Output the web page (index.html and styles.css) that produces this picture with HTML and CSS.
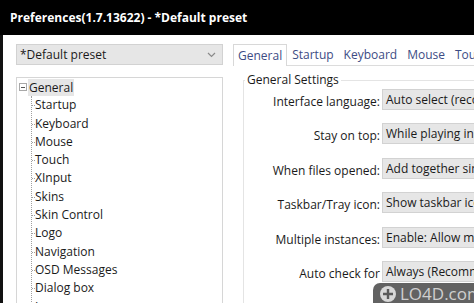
FILE: index.html
```html
<!DOCTYPE html>
<html lang="en">
<head>
  <meta charset="UTF-8">
  <title>Preferences</title>
  <link rel="stylesheet" href="styles.css">
</head>
<body>
  <div class="titlebar">Preferences(1.7.13622) - *Default preset</div>

  <div class="window">
    <!-- left: preset + tree -->
    <div class="sidebar">
      <div class="preset">
        <span>*Default preset</span>
        <svg class="chevron" width="9" height="6" viewBox="0 0 9 6"><path d="M1 1l3.5 3.5L8 1" fill="none" stroke="#8a8a8a" stroke-width="1.2"/></svg>
      </div>

      <div class="tree">
        <div class="root">
          <span class="toggle"></span>
          <span class="root-label">General</span>
        </div>
        <ul class="children">
          <li>Startup</li>
          <li>Keyboard</li>
          <li>Mouse</li>
          <li>Touch</li>
          <li>XInput</li>
          <li>Skins</li>
          <li>Skin Control</li>
          <li>Logo</li>
          <li>Navigation</li>
          <li>OSD Messages</li>
          <li>Dialog box</li>
          <li>Language</li>
        </ul>
      </div>
    </div>

    <!-- right: tabs + settings -->
    <div class="main">
      <div class="tabs">
        <span class="tab active">General</span>
        <span class="tab">Startup</span>
        <span class="tab">Keyboard</span>
        <span class="tab">Mouse</span>
        <span class="tab">Touch</span>
      </div>

      <div class="panel">
        <fieldset class="group">
          <legend>General Settings</legend>
          <div class="form">
            <label>Interface language:</label>
            <div class="select">Auto select (recommended)</div>

            <label>Stay on top:</label>
            <div class="select">While playing in fullscreen</div>

            <label>When files opened:</label>
            <div class="select">Add together similar files</div>

            <label>Taskbar/Tray icon:</label>
            <div class="select">Show taskbar icon</div>

            <label>Multiple instances:</label>
            <div class="select">Enable: Allow multiple</div>

            <label>Auto check for</label>
            <div class="select">Always (Recommended)</div>
          </div>
        </fieldset>
      </div>
    </div>
  </div>

  <!-- watermark -->
  <div class="watermark">
    <svg width="20" height="18" viewBox="0 0 20 18">
      <circle cx="10" cy="9" r="8" fill="#d8d8d8"/>
      <path d="M5 9h10M10 4v10" stroke="#5a5a5a" stroke-width="2.4"/>
    </svg>
    <span>LO4D.com</span>
  </div>
</body>
</html>
```

FILE: styles.css
```css
body {
  margin: 0;
  width: 474px;
  height: 303px;
  overflow: hidden;
  background: #fff;
  font-family: "Open Sans", "Noto Sans", sans-serif;
  font-size: 12px;
  color: #1a1a1a;
  position: relative;
}
.titlebar {
  height: 35px;
  line-height: 35px;
  background: #000;
  color: #fff;
  font-weight: bold;
  font-size: 12px;
  padding-left: 10px;
}
.window {
  display: flex;
  height: 268px;
  border-left: 3px solid #111;
}
.sidebar {
  width: 207px;
  padding-left: 13px;
  padding-top: 9px;
  flex-shrink: 0;
}
.preset {
  height: 19px;
  background: #e6e6e6;
  border: 1px solid #d2d2d2;
  display: flex;
  align-items: center;
  justify-content: space-between;
  padding: 0 6px 0 3px;
}
.tree {
  margin-top: 12px;
  border: 1px solid #d6d6d6;
  border-bottom: none;
  height: 240px;
  padding-left: 2px;
  overflow: hidden;
}
.root {
  display: flex;
  align-items: center;
  height: 18.3px;
}
.toggle {
  width: 6px;
  height: 6px;
  border: 1px solid #a8a8a8;
  position: relative;
  margin-right: 1px;
}
.toggle::after {
  content: "";
  position: absolute;
  left: 1px;
  right: 1px;
  top: 2.5px;
  height: 1px;
  background: #555;
}
.root-label {
  background: #e6e6e6;
  padding: 0 1px;
  line-height: 17px;
}
.children {
  list-style: none;
  margin: 0 0 0 12px;
  padding: 0;
  border-left: 1px dotted #a0a0a0;
}
.children li {
  height: 18.3px;
  line-height: 18.3px;
  padding-left: 3px;
  position: relative;
}
.children li::before {
  content: "";
  position: absolute;
  left: 0;
  top: 9px;
  width: 3px;
  border-top: 1px dotted #a0a0a0;
}
.main {
  margin-left: 10px;
  padding-top: 9px;
  flex: 1;
  min-width: 0;
  overflow: hidden;
}
.tabs {
  display: flex;
  height: 22px;
  white-space: nowrap;
}
.tab {
  padding: 0 5px;
  line-height: 21px;
  color: #3d4c84;
}
.tab.active {
  padding: 0 4px;
  border: 1px solid #d8d8d8;
  border-bottom: none;
  background: #fff;
  position: relative;
  z-index: 1;
}
.panel {
  border-top: 1px solid #dcdcdc;
  margin-top: -1px;
  height: 240px;
  padding-left: 10px;
}
.group {
  margin: 6px 0 0 0;
  padding: 1px 0 0 0;
  border: 1px solid #e4e4e4;
  border-right: none;
  height: 240px;
}
.group legend {
  padding: 0 2px;
  margin-left: 1px;
  line-height: 16px;
  color: #1a1a1a;
}
.form {
  display: grid;
  grid-template-columns: 136px 200px;
  grid-auto-rows: 21px;
  column-gap: 2px;
  row-gap: 13.4px;
}
.form label {
  text-align: right;
  line-height: 16px;
  padding-top: 5px;
  white-space: nowrap;
}
.select {
  height: 19px;
  line-height: 19px;
  background: #e6e6e6;
  border: 1px solid #d2d2d2;
  border-right: none;
  padding-left: 3px;
  white-space: nowrap;
  overflow: hidden;
}
.watermark {
  position: absolute;
  left: 373px;
  top: 283px;
  width: 110px;
  height: 26px;
  border-radius: 7px;
  background: rgba(70, 70, 70, 0.85);
  display: flex;
  align-items: flex-start;
  gap: 2px;
  padding: 2px 0 0 5px;
  color: #cfcfcf;
  font-size: 17px;
  line-height: 18px;
}
```
